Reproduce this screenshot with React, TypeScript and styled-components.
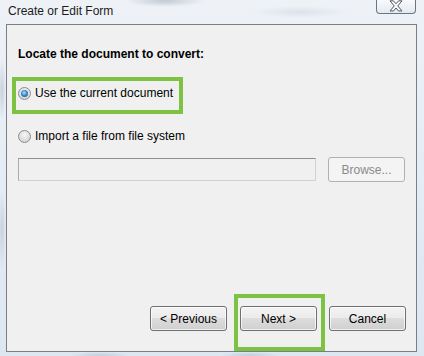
import styled, { createGlobalStyle } from 'styled-components';

const GlobalStyle = createGlobalStyle`
    html, body {
        margin : 0;
        padding : 0;
    }
    body {
        font-family : "Liberation Sans", Arial, sans-serif;
        font-size : 12px;
        color : #000;
    }
`

const App = () => {
    return (
        <>
            <GlobalStyle />
            <StWindow>
                <StTitleBar>
                    <StTitle>Create or Edit Form</StTitle>
                    <StCloseButton aria-label = "Close">
                        <svg width = "16" height = "12" viewBox = "0 0 16 12">
                            <path
                                d = "M2 0.8 L5.4 0.8 L8 3.8 L10.6 0.8 L14 0.8 L9.8 5.9 L14 11 L10.6 11 L8 8 L5.4 11 L2 11 L6.2 5.9 Z"
                                fill = "#f7f8fa"
                                stroke = "#555b63"
                                strokeWidth = "1"
                                strokeLinejoin = "round"
                            />
                        </svg>
                    </StCloseButton>
                </StTitleBar>
                <StClient>
                    <StHeading>Locate the document to convert:</StHeading>
                    <StRadioRow $mt = {23}>
                        <StHighlight $top = {8} $left = {6} $right = {10} $bottom = {13}>
                            <StRadio $checked />
                            <span>Use the current document</span>
                        </StHighlight>
                    </StRadioRow>
                    <StRadioRow $mt = {27}>
                        <StRadio />
                        <span>Import a file from file system</span>
                    </StRadioRow>
                    <StFileRow>
                        <StPathField disabled />
                        <StButton disabled>Browse...</StButton>
                    </StFileRow>
                    <StSpacer />
                    <StButtonRow>
                        <StButton>&lt; Previous</StButton>
                        <StHighlight $top = {12} $left = {6} $right = {8} $bottom = {20}>
                            <StButton>Next &gt;</StButton>
                        </StHighlight>
                        <StButton>Cancel</StButton>
                    </StButtonRow>
                </StClient>
            </StWindow>
        </>
    )
}

export default App;

const StWindow = styled.div`
    width : 424px;
    height : 356px;
    display : flex;
    flex-direction : column;
    overflow : hidden;
    background :
        radial-gradient(ellipse 40px 6px at 165px 1px, rgba(120, 130, 145, 0.35), transparent),
        radial-gradient(ellipse 50px 6px at 300px 12px, rgba(170, 180, 195, 0.25), transparent),
        radial-gradient(ellipse 4px 30px at 2px 90px, rgba(140, 150, 165, 0.35), transparent),
        radial-gradient(ellipse 4px 40px at 2px 230px, rgba(140, 150, 165, 0.3), transparent),
        radial-gradient(ellipse 30px 3px at 100px 355px, rgba(150, 160, 175, 0.35), transparent),
        radial-gradient(ellipse 30px 3px at 250px 355px, rgba(150, 160, 175, 0.35), transparent),
        linear-gradient(180deg, #eef2f7 0%, #e4ecf5 50%, #dde7f2 100%);
`

const StTitleBar = styled.div`
    height : 24px;
    flex : none;
    display : flex;
    align-items : flex-start;
    justify-content : space-between;
    padding : 0 8px 0 8px;
`

const StTitle = styled.div`
    margin-top : 4px;
    font-size : 12px;
    line-height : 15px;
    color : #1c1c1c;
`

const StCloseButton = styled.div`
    width : 40px;
    height : 14px;
    box-sizing : border-box;
    border : 1px solid #6f757d;
    border-top : none;
    border-radius : 0 0 4px 4px;
    background : linear-gradient(180deg, rgba(255, 255, 255, 0.6), rgba(225, 232, 240, 0.8));
    display : flex;
    align-items : flex-start;
    justify-content : center;
`

const StClient = styled.div`
    flex : 1;
    margin : 0 7px 4px 6px;
    border : 1px solid #7a7f86;
    background-color : #f0f0f0;
    display : flex;
    flex-direction : column;
    padding : 21px 10px 20px 11px;
`

const StHeading = styled.div`
    font-weight : 700;
    font-size : 12px;
    line-height : 16px;
`

const StRadioRow = styled.div<{ $mt : number }>`
    margin-top : ${(p) => p.$mt}px;
    display : flex;
    align-items : center;
    gap : 4px;
    line-height : 16px;
    height : 16px;
`

const StHighlight = styled.div<{ $top : number, $left : number, $right : number, $bottom : number }>`
    position : relative;
    display : flex;
    align-items : center;
    gap : 4px;
    &::after {
        content : "";
        position : absolute;
        top : -${(p) => p.$top}px;
        left : -${(p) => p.$left}px;
        right : -${(p) => p.$right}px;
        bottom : -${(p) => p.$bottom}px;
        border : 4px solid #7dc242;
        pointer-events : none;
    }
`

const StRadio = styled.span<{ $checked? : boolean }>`
    width : 13px;
    height : 13px;
    box-sizing : border-box;
    border-radius : 50%;
    border : 1px solid #8a8c8e;
    background : radial-gradient(circle at 50% 35%, #f6f6f6 0%, #d8d8d8 70%, #cfcfcf 100%);
    display : inline-flex;
    align-items : center;
    justify-content : center;
    flex : none;
    &::before {
        content : "";
        width : 7px;
        height : 7px;
        border-radius : 50%;
        display : ${(p) => (p.$checked ? 'block' : 'none')};
        background : radial-gradient(circle at 45% 40%, #b9e4fb 0%, #3a8bcc 45%, #17497c 100%);
    }
`

const StFileRow = styled.div`
    margin-top : 13px;
    display : flex;
    align-items : center;
    gap : 12px;
`

const StPathField = styled.input`
    width : 298px;
    height : 23px;
    box-sizing : border-box;
    border : 1px solid #cfd3d8;
    border-top-color : #8d9095;
    border-left-color : #a9acb0;
    background-color : #f0f0f0;
    padding : 0;
    margin : 0;
`

const StButton = styled.button`
    width : 77px;
    height : 25px;
    box-sizing : border-box;
    border : 1px solid #707070;
    border-radius : 3px;
    background : linear-gradient(180deg, #f3f3f3 0%, #ebebeb 49%, #dddddd 50%, #cfcfcf 100%);
    box-shadow : inset 0 0 0 1px rgba(255, 255, 255, 0.7);
    font-family : "Liberation Sans", Arial, sans-serif;
    font-size : 12px;
    color : #000;
    padding : 0;
    margin : 0;
    &:disabled {
        border-color : #adb2b5;
        background : #f4f4f4;
        color : #8a8a8a;
        box-shadow : none;
    }
`

const StSpacer = styled.div`
    flex : 1;
`

const StButtonRow = styled.div`
    display : flex;
    justify-content : flex-end;
    gap : 12px;
    & > :first-child {
        margin-right : 1px;
    }
`
